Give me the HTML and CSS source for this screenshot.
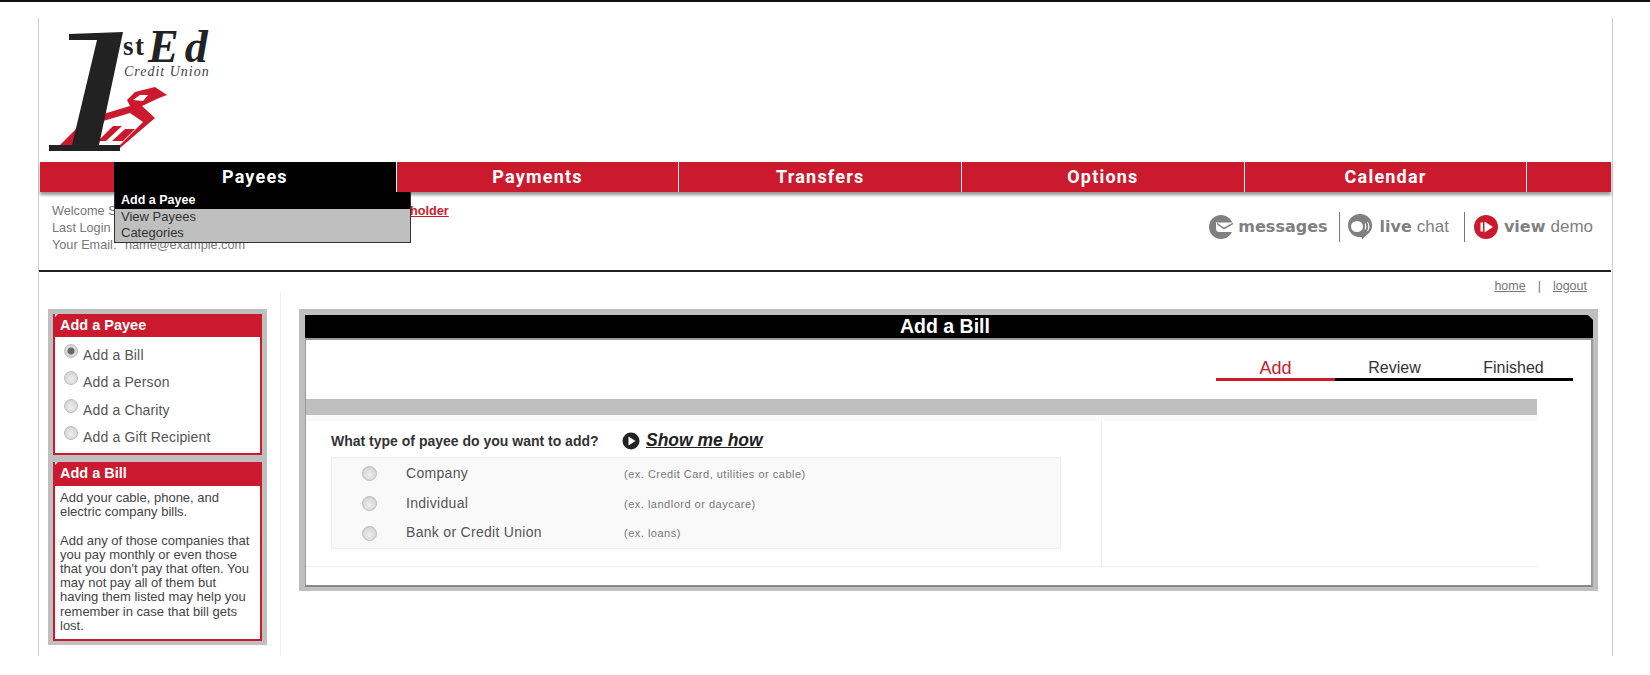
FILE: index.html
```html
<!DOCTYPE html>
<html>
  <head>
    <meta charset="UTF-8">
    <title>Add a Bill</title>
    <link rel="stylesheet" href="styles.css">
  </head>
  <body>
    <div class="topline"></div>
    <div class="page">
      <header class="logo-row">
        <svg class="logo" width="180" height="144" viewBox="40 18 180 144">
          <polygon class="red" points="60,145 78,127 76,145"/>
          <polygon class="red" points="100,115 130,106 127,100 135,92 155,87 167,95 159,98 142,106 155,118 120,148 97,148"/>
          <polygon class="white" points="100,122 130,113 143,122 117,148 97,146"/>
          <polygon class="white" points="133,100 140,95 148,95 143,101"/>
          <polygon class="red" points="98,141 113,126 122,126 106,141"/>
          <polygon class="red" points="112,141 125,129 135,129 123,141"/>
          <polygon class="black" points="69,34 123,32 99,145 120,145 120,151 49,151 49,145 72,145 97,40 69,40"/>
          <text class="logo-st" x="123" y="55">st</text>
          <text class="logo-ed" x="148" y="62">Ed</text>
          <text class="logo-cu" x="124" y="76">Credit Union</text>
        </svg>
      </header>

      <nav class="nav">
        <div class="tab active">Payees
          <div class="dropdown">
            <div class="drop-item current">Add a Payee</div>
            <div class="drop-item">View Payees</div>
            <div class="drop-item">Categories</div>
          </div>
        </div>
        <div class="tab">Payments</div>
        <div class="tab">Transfers</div>
        <div class="tab">Options</div>
        <div class="tab">Calendar</div>
      </nav>

      <div class="account">
        <div class="account-info">
          <div><span class="welcome-name">Welcome Sample Member</span><a class="holder" href="#">holder</a></div>
          <div>Last Login 01/01/2015 09:00 AM</div>
          <div><span class="email-label">Your Email:</span>name@example.com</div>
        </div>
        <div class="quick-links">
          <svg class="quick-icon" width="24" height="24" viewBox="0 0 24 24">
            <circle cx="12" cy="12" r="12" fill="#808080"/>
            <path fill="#fff" d="M7 7.500h17v9.500H10c-2 0-3-1.500-3-3.500z"/>
            <path fill="none" stroke="#808080" stroke-width="1.500" d="M8 8.500l7 5 9-5"/>
          </svg>
          <span class="ql-bold ql-messages">messages</span>
          <span class="ql-sep"></span>
          <svg class="quick-icon" width="24" height="26" viewBox="0 0 24 26">
            <path fill="#808080" d="M12 0a12 11.500 0 0 1 6 21.500L14 25.500V23a12 11.500 0 0 1-2 0A12 11.500 0 0 1 12 0z"/>
            <ellipse cx="9" cy="12.500" rx="6" ry="5.500" fill="#fff"/>
            <path fill="none" stroke="#fff" stroke-width="1.100" d="M17 9.500c1 1.800 1 4.200 0 6M19.500 8c1.500 2.500 1.500 6.500 0 9"/>
          </svg>
          <span class="ql-bold ql-live">live</span><span class="ql-light ql-chat">chat</span>
          <span class="ql-sep ql-sep-wide"></span>
          <svg class="quick-icon" width="24" height="24" viewBox="0 0 24 24">
            <circle cx="12" cy="12" r="12" fill="#cb1a2e"/>
            <rect x="6.500" y="7.500" width="2.500" height="9" fill="#fff"/>
            <polygon points="10.500,6.500 19,12 10.500,17.500" fill="#fff"/>
          </svg>
          <span class="ql-bold ql-view">view</span><span class="ql-light ql-demo">demo</span>
        </div>
      </div>

      <div class="util-links">
        <a href="#">home</a><span class="util-sep">|</span><a href="#">logout</a>
      </div>

      <div class="content">
        <aside class="sidebar">
          <div class="side-frame">
            <section class="side-box">
              <h3 class="side-title side-title-short">Add a Payee</h3>
              <div class="side-options">
                <div class="side-option"><span class="radio checked"></span><span class="side-label">Add a Bill</span></div>
                <div class="side-option"><span class="radio"></span><span class="side-label">Add a Person</span></div>
                <div class="side-option"><span class="radio"></span><span class="side-label">Add a Charity</span></div>
                <div class="side-option"><span class="radio"></span><span class="side-label">Add a Gift Recipient</span></div>
              </div>
            </section>
            <section class="side-box">
              <h3 class="side-title">Add a Bill</h3>
              <div class="side-text">
                <p>Add your cable, phone, and electric company bills.</p>
                <p>Add any of those companies that you pay monthly or even those that you don't pay that often. You may not pay all of them but having them listed may help you remember in case that bill gets lost.</p>
              </div>
            </section>
          </div>
        </aside>

        <main class="main">
          <div class="panel">
            <h2 class="panel-title">Add a Bill</h2>
            <div class="panel-body">
              <div class="steps">
                <div class="step current">Add</div>
                <div class="step">Review</div>
                <div class="step">Finished</div>
              </div>
              <div class="grey-bar"></div>
              <div class="form-row">
                <div class="form-col">
                  <div class="question">
                    <span class="question-text">What type of payee do you want to add?</span>
                    <svg class="how-icon" width="18" height="18" viewBox="0 0 18 18">
                      <circle cx="9" cy="9" r="8.500" fill="#222"/>
                      <polygon points="6.500,4.500 13.500,9 6.500,13.500" fill="#fff"/>
                    </svg>
                    <a class="how-link" href="#">Show me how</a>
                  </div>
                  <div class="type-list">
                    <div class="type-row"><span class="radio big"></span><span class="type-name">Company</span><span class="type-ex">(ex. Credit Card, utilities or cable)</span></div>
                    <div class="type-row"><span class="radio big"></span><span class="type-name">Individual</span><span class="type-ex">(ex. landlord or daycare)</span></div>
                    <div class="type-row"><span class="radio big"></span><span class="type-name">Bank or Credit Union</span><span class="type-ex">(ex. loans)</span></div>
                  </div>
                </div>
              </div>
            </div>
          </div>
        </main>
      </div>
    </div>
  </body>
</html>
```

FILE: styles.css
```css
body {
  margin: 0;
  background-color: white;
  font-family: "Liberation Sans", Arial, sans-serif;
  color: #555;
}

.topline {
  height: 2px;
  background-color: #111;
}

.page {
  box-sizing: border-box;
  width: 1575px;
  height: 638px;
  margin: 16px 0 0 38px;
  border-left: 1px solid #ccc;
  border-right: 1px solid #ccc;
}

/* Logo */
.logo-row {
  height: 144px;
  margin-left: 1px;
}

.logo {
  display: block;
}

.red {
  fill: #cb1a2e;
}

.white {
  fill: #fff;
}

.black {
  fill: #222;
}

.logo-st {
  font-family: "Liberation Serif", serif;
  font-weight: bold;
  font-size: 27px;
  letter-spacing: 1.5px;
  fill: #222;
}

.logo-ed {
  font-family: "Liberation Serif", serif;
  font-weight: bold;
  font-style: italic;
  font-size: 46px;
  letter-spacing: 6px;
  fill: #222;
}

.logo-cu {
  font-family: "Liberation Serif", serif;
  font-style: italic;
  font-size: 14px;
  letter-spacing: 1px;
  fill: #444;
}

/* Nav */
.nav {
  display: flex;
  width: 1571px;
  height: 30px;
  margin-left: 1px;
  padding-left: 74px;
  box-sizing: border-box;
  background-color: #cb1a2e;
  box-shadow: 0 3px 3px #999;
}

.tab {
  position: relative;
  box-sizing: border-box;
  width: 282.7px;
  line-height: 30px;
  text-align: center;
  font-family: Roboto, sans-serif;
  font-weight: bold;
  font-size: 18px;
  letter-spacing: 1.2px;
  color: white;
  border-right: 1px solid #eee;
}

.tab.active {
  background-color: black;
  border-right: 1px solid white;
}

.dropdown {
  position: absolute;
  z-index: 2;
  left: 0;
  top: 30px;
  box-sizing: border-box;
  width: 297px;
  height: 51px;
  border: 1px solid #333;
  border-top: 0;
  background-color: #bfbfbf;
  font-family: "Liberation Sans", Arial, sans-serif;
  font-weight: normal;
  font-size: 13px;
  letter-spacing: 0;
  text-align: left;
  line-height: 16.5px;
  color: #333;
}

.drop-item {
  padding-left: 6px;
}

.drop-item.current {
  background-color: black;
  color: white;
  font-weight: bold;
  font-size: 12.5px;
}

/* Account row */
.account {
  display: flex;
  justify-content: space-between;
  box-sizing: border-box;
  height: 80px;
  padding: 11px 18px 0 13px;
  border-bottom: 2px solid #222;
  margin-right: 1px;
  font-size: 12.7px;
  line-height: 16.8px;
  color: #777;
}

.welcome-name {
  display: inline-block;
  width: 358px;
}

.holder {
  color: #cb1a2e;
  font-weight: bold;
  text-decoration: underline;
}

.email-label {
  display: inline-block;
  width: 73px;
}

.quick-links {
  display: flex;
  align-items: center;
  height: 34px;
  margin-top: 7px;
  color: #808080;
}

.quick-icon {
  flex: none;
}

.ql-bold {
  font-family: "DejaVu Sans", sans-serif;
  font-weight: bold;
  font-size: 16px;
}

.ql-light {
  font-size: 17px;
  margin-left: 5px;
}

.ql-messages {
  margin-left: 5px;
}

.ql-sep {
  width: 1px;
  height: 30px;
  margin: 0 8px 0 11px;
  background-color: #777;
}

.ql-sep-wide {
  margin: 0 9px 0 15px;
}

.ql-live {
  margin-left: 8px;
}

.ql-view {
  margin-left: 6px;
}

/* home / logout */
.util-links {
  height: 20px;
  padding-right: 25px;
  text-align: right;
  font-size: 12.5px;
  line-height: 28px;
  color: #777;
}

.util-links a {
  color: #777;
  text-decoration: underline;
}

.util-sep {
  margin: 0 12px;
}

/* Content */
.content {
  display: flex;
  height: 364px;
}

.sidebar {
  box-sizing: border-box;
  width: 242px;
  padding: 17px 0 0 9px;
  border-right: 1px solid #eee;
}

.side-frame {
  box-sizing: border-box;
  width: 219px;
  height: 336px;
  padding: 5px;
  background-color: #bfbfbf;
}

.side-box {
  background-color: white;
  border: 2px solid #cb1a2e;
  border-top: 0;
  margin-bottom: 7px;
}

.side-title {
  margin: 0 -2px;
  height: 24px;
  padding-left: 7px;
  background-color: #cb1a2e;
  clip-path: polygon(5px 0, 100% 0, 100% 100%, 0 100%, 0 5px);
  color: white;
  font-size: 14.5px;
  line-height: 22px;
}

.side-title-short {
  height: 23px;
  line-height: 23px;
}

.side-options {
  box-sizing: border-box;
  height: 116px;
  padding-left: 9px;
}

.side-option {
  display: flex;
  height: 27.5px;
  align-items: center;
}

.side-label {
  position: relative;
  top: 4px;
  margin-left: 5px;
  font-size: 14px;
  letter-spacing: 0.15px;
}

.radio {
  flex: none;
  box-sizing: border-box;
  width: 14px;
  height: 14px;
  border: 1px solid #bbb;
  border-radius: 50%;
  background: radial-gradient(circle at 50% 60%, #eee, #ccc);
}

.radio.checked {
  background: radial-gradient(circle, #666 0, #666 3px, #ddd 4px, #ccc 100%);
}

.radio.big {
  width: 15px;
  height: 15px;
}

.side-text {
  box-sizing: border-box;
  height: 153px;
  padding: 5px 6px 0 5px;
  font-size: 13px;
  line-height: 14.2px;
  color: #444;
}

.side-text p {
  margin: 0 0 14.2px;
}

/* Main panel */
.main {
  padding: 17px 0 0 18px;
}

.panel {
  box-sizing: border-box;
  width: 1299px;
  height: 282px;
  padding: 6px 5px 4px 6px;
  background-color: #bfbfbf;
}

.panel-title {
  height: 23px;
  margin: 0;
  padding-right: 8px;
  background-color: black;
  clip-path: polygon(0 0, calc(100% - 5px) 0, 100% 5px, 100% 100%, 0 100%);
  text-align: center;
  color: white;
  font-size: 19.5px;
  line-height: 23px;
}

.panel-body {
  box-sizing: border-box;
  height: 249px;
  background-color: white;
  border-top: 2px solid #999;
  border-left: 1px solid #999;
  border-right: 2px solid #999;
  border-bottom: 2px solid #888;
}

.steps {
  display: flex;
  justify-content: flex-end;
  height: 41px;
  padding-right: 18px;
}

.step {
  box-sizing: border-box;
  width: 119px;
  height: 41px;
  padding-top: 19px;
  border-bottom: 3px solid black;
  text-align: center;
  font-size: 16px;
  line-height: 18px;
  color: #333;
}

.step.current {
  color: #cb1a2e;
  border-bottom-color: #cb1a2e;
  font-size: 18px;
}

.grey-bar {
  width: 1231px;
  height: 16px;
  margin-top: 18px;
  background-color: #bfbfbf;
}

.form-row {
  box-sizing: border-box;
  width: 1231px;
  height: 152px;
  border-top: 6px solid #fafafa;
  border-bottom: 1px solid #eee;
}

.form-col {
  box-sizing: border-box;
  width: 796px;
  height: 145px;
  padding: 6px 0 0 25px;
  border-right: 1px solid #eee;
}

.question {
  display: flex;
  align-items: center;
  height: 27px;
}

.question-text {
  width: 291px;
  font-size: 14px;
  font-weight: bold;
  color: #333;
}

.how-link {
  margin-left: 6px;
  font-size: 17.5px;
  font-weight: bold;
  font-style: italic;
  color: #222;
  text-decoration: underline;
}

.type-list {
  box-sizing: border-box;
  width: 730px;
  height: 92px;
  margin-top: 3px;
  padding-top: 1px;
  background-color: #f9f9f9;
  border: 1px solid #eee;
}

.type-row {
  display: flex;
  align-items: center;
  height: 29.7px;
  padding-left: 30px;
}

.type-name {
  width: 218px;
  margin-left: 29px;
  position: relative;
  top: -1px;
  font-size: 14px;
  letter-spacing: 0.3px;
}

.type-ex {
  font-size: 11px;
  letter-spacing: 0.5px;
  color: #777;
}
```
